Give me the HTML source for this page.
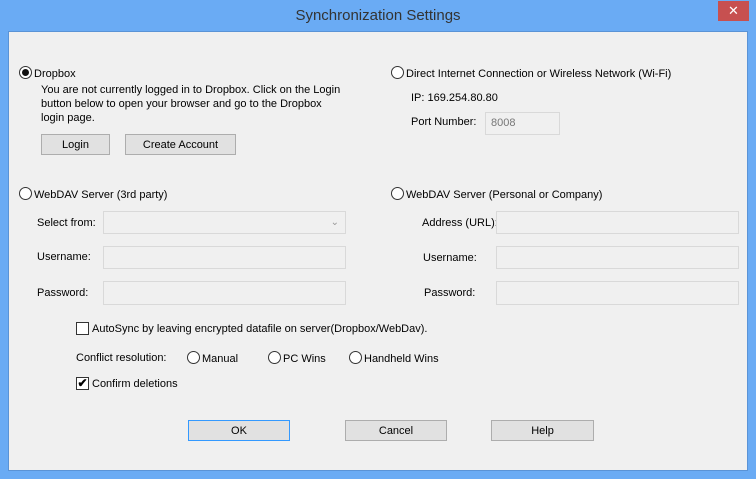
<!DOCTYPE html>
<html><head><meta charset="utf-8"><style>
*{margin:0;padding:0;box-sizing:border-box}
body{width:756px;height:479px;background:#6aabf4;font-family:"Liberation Sans",sans-serif;font-size:11px;color:#000;position:relative;overflow:hidden}
.c{position:absolute;left:8px;top:31px;width:740px;height:440px;background:#f0f0f0;border:1px solid #5a93d6}
.t{position:absolute;white-space:nowrap;line-height:14px}
.r{position:absolute;width:13px;height:13px;border:1px solid #333;border-radius:50%;background:#fff}
.r.on::after{content:"";position:absolute;left:2px;top:2px;width:7px;height:7px;border-radius:50%;background:#111}
.cb{position:absolute;width:13px;height:13px;border:1px solid #333;background:#fff}
.b{position:absolute;border:1px solid #adadad;background:#e1e1e1;text-align:center;line-height:20px}
.i{position:absolute;border:1px solid #d9d9d9;background:#f0f0f0}
</style></head><body>
<div class="t" style="left:0;width:756px;text-align:center;top:7px;font-size:15px;line-height:18px;color:#333">Synchronization Settings</div>
<div style="position:absolute;left:718px;top:1px;width:31px;height:20px;background:#c75050;color:#fff;text-align:center;font-size:13px;line-height:20px">✕</div>
<div class="c"></div>

<div class="r on" style="left:19px;top:66px"></div><div class="t" style="left:34px;top:67px">Dropbox</div>
<div class="t" style="left:41px;top:83px">You are not currently logged in to Dropbox. Click on the Login</div>
<div class="t" style="left:41px;top:97px">button below to open your browser and go to the Dropbox</div>
<div class="t" style="left:41px;top:111px">login page.</div>
<div class="b" style="left:41px;top:134px;width:69px;height:21px">Login</div>
<div class="b" style="left:125px;top:134px;width:111px;height:21px">Create Account</div>

<div class="r" style="left:391px;top:66px"></div><div class="t" style="left:406px;top:67px">Direct Internet Connection or Wireless Network (Wi-Fi)</div>
<div class="t" style="left:411px;top:91px">IP: 169.254.80.80</div>
<div class="t" style="left:411px;top:115px">Port Number:</div>
<div class="i" style="left:485px;top:112px;width:75px;height:23px;color:#777;padding:4px 0 0 5px">8008</div>

<div class="r" style="left:19px;top:187px"></div><div class="t" style="left:34px;top:188px">WebDAV Server (3rd party)</div>
<div class="t" style="left:37px;top:216px">Select from:</div>
<div class="i" style="left:103px;top:211px;width:243px;height:23px;color:#999;font-size:10px;text-align:right;padding:5px 6px 0 0">⌄</div>
<div class="t" style="left:37px;top:250px">Username:</div>
<div class="i" style="left:103px;top:246px;width:243px;height:23px"></div>
<div class="t" style="left:37px;top:286px">Password:</div>
<div class="i" style="left:103px;top:281px;width:243px;height:24px"></div>

<div class="r" style="left:391px;top:187px"></div><div class="t" style="left:406px;top:188px">WebDAV Server (Personal or Company)</div>
<div class="t" style="left:422px;top:216px">Address (URL):</div>
<div class="i" style="left:496px;top:211px;width:243px;height:23px"></div>
<div class="t" style="left:423px;top:251px">Username:</div>
<div class="i" style="left:496px;top:246px;width:243px;height:23px"></div>
<div class="t" style="left:424px;top:286px">Password:</div>
<div class="i" style="left:496px;top:281px;width:243px;height:24px"></div>

<div class="cb" style="left:76px;top:322px"></div><div class="t" style="left:92px;top:322px">AutoSync by leaving encrypted datafile on server(Dropbox/WebDav).</div>
<div class="t" style="left:76px;top:351px">Conflict resolution:</div>
<div class="r" style="left:187px;top:351px"></div><div class="t" style="left:202px;top:352px">Manual</div>
<div class="r" style="left:268px;top:351px"></div><div class="t" style="left:283px;top:352px">PC Wins</div>
<div class="r" style="left:349px;top:351px"></div><div class="t" style="left:364px;top:352px">Handheld Wins</div>
<div class="cb" style="left:76px;top:377px;font-size:12px;line-height:11px;text-align:center;font-weight:bold">✔</div><div class="t" style="left:92px;top:377px">Confirm deletions</div>

<div class="b" style="left:188px;top:420px;width:102px;height:21px;border-color:#3399ff">OK</div>
<div class="b" style="left:345px;top:420px;width:102px;height:21px">Cancel</div>
<div class="b" style="left:491px;top:420px;width:103px;height:21px">Help</div>
</body></html>
